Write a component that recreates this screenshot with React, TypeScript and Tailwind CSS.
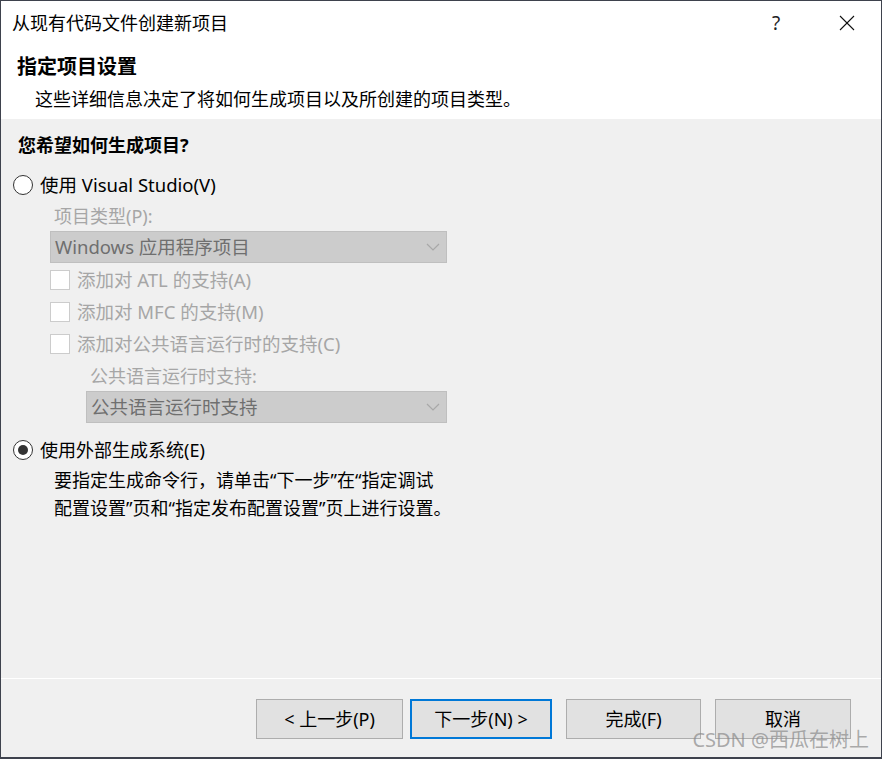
import React from "react";

const FONT = { fontFamily: '"Noto Sans", "Noto Sans CJK SC", sans-serif' };

function Chevron() {
  return (
    <svg width="14" height="8" viewBox="0 0 14 8" className="shrink-0">
      <polyline points="1,1 7,7 13,1" fill="none" stroke="#a8a8a8" strokeWidth="1.2" />
    </svg>
  );
}

function Dropdown({ text, width }: { text: string; width: string }) {
  return (
    <div className={`${width} h-[32px] bg-[#cccccc] border border-[#bfbfbf] flex items-center justify-between pl-[4px] pr-[6px]`}>
      <span className="text-[18.5px] leading-[30px] text-[#6f6f6f]">{text}</span>
      <Chevron />
    </div>
  );
}

function CheckRow({ label }: { label: string }) {
  return (
    <div className="h-[32px] flex items-center pl-[49px]">
      <div className="w-[20px] h-[20px] bg-white border border-[#cccccc]" />
      <span className="ml-[7px] text-[18.5px] leading-[26px] text-[#a6a6a6]">{label}</span>
    </div>
  );
}

function Radio({ checked }: { checked?: boolean }) {
  return (
    <div className="w-[20px] h-[20px] rounded-full bg-white border border-[#333333] flex items-center justify-center">
      {checked && <div className="w-[10px] h-[10px] rounded-full bg-[#333333]" />}
    </div>
  );
}

function Button({ label, width, focused }: { label: string; width: string; focused?: boolean }) {
  return (
    <div
      className={`${width} h-[40px] bg-[#e1e1e1] flex items-center justify-center text-[18px] text-black ${
        focused ? "border-2 border-[#0078d7]" : "border border-[#adadad]"
      }`}
    >
      {label}
    </div>
  );
}

export default function App() {
  return (
    <div
      style={FONT}
      className="relative w-[882px] h-[759px] flex flex-col border border-b-2 border-[#3e424d] bg-[#f0f0f0] overflow-hidden text-black"
    >
      {/* title bar + header */}
      <div className="bg-white">
        <div className="h-[43px] flex items-center pl-[11px]">
          <span className="text-[18px] leading-[26px] flex-1">从现有代码文件创建新项目</span>
          <span className="w-[20px] text-center text-[19px] leading-[26px] text-[#222] mr-[53px]">?</span>
          <svg width="16" height="16" viewBox="0 0 16 16" className="mr-[26px]">
            <line x1="1" y1="1" x2="15" y2="15" stroke="#111" strokeWidth="1.1" />
            <line x1="15" y1="1" x2="1" y2="15" stroke="#111" strokeWidth="1.1" />
          </svg>
        </div>
        <div className="pt-[9px] pb-[7px]">
          <div className="pl-[16px] text-[20px] leading-[28px] font-bold">指定项目设置</div>
          <div className="mt-[5px] pl-[34px] text-[18px] leading-[26px]">
            这些详细信息决定了将如何生成项目以及所创建的项目类型。
          </div>
        </div>
      </div>

      {/* body */}
      <div className="flex-1 flex flex-col pt-[13px]">
        <div className="pl-[17px] text-[18px] leading-[26px] font-bold">您希望如何生成项目?</div>

        <div className="mt-[13px] h-[28px] flex items-center pl-[12px]">
          <Radio />
          <span className="ml-[7px] text-[18.5px] leading-[26px]">使用 Visual Studio(V)</span>
        </div>

        <div className="mt-[4px] h-[26px] flex items-center pl-[53px] text-[18px] text-[#a6a6a6]">项目类型(P):</div>
        <div className="mt-[2px] pl-[49px]">
          <Dropdown text="Windows 应用程序项目" width="w-[397px]" />
        </div>

        <div className="mt-[1px]">
          <CheckRow label="添加对 ATL 的支持(A)" />
          <CheckRow label="添加对 MFC 的支持(M)" />
          <CheckRow label="添加对公共语言运行时的支持(C)" />
        </div>

        <div className="mt-[2px] h-[28px] flex items-center pl-[89px] text-[18px] text-[#a6a6a6]">公共语言运行时支持:</div>
        <div className="mt-[1px] pl-[85px]">
          <Dropdown text="公共语言运行时支持" width="w-[361px]" />
        </div>

        <div className="mt-[13px] h-[28px] flex items-center pl-[12px]">
          <Radio checked />
          <span className="ml-[7px] text-[18px] leading-[26px]">使用外部生成系统(E)</span>
        </div>
        <div className="mt-[2px] pl-[53px] text-[18px] leading-[28px]">
          <div>要指定生成命令行，请单击“下一步”在“指定调试</div>
          <div>配置设置”页和“指定发布配置设置”页上进行设置。</div>
        </div>
      </div>

      {/* separator */}
      <div className="h-px bg-white" />

      {/* footer */}
      <div className="h-[78px] pt-[20px] flex items-start pl-[255px]">
        <Button label="< 上一步(P)" width="w-[147px]" />
        <div className="ml-[7px]">
          <Button label="下一步(N) >" width="w-[142px]" focused />
        </div>
        <div className="ml-[14px]">
          <Button label="完成(F)" width="w-[135px]" />
        </div>
        <div className="ml-[14px]">
          <Button label="取消" width="w-[136px]" />
        </div>
      </div>

      {/* watermark */}
      <div className="absolute right-[12px] bottom-[4px] text-[20px] leading-[26px] text-[#8a8a8a]/70 pointer-events-none">
        CSDN @西瓜在树上
      </div>
    </div>
  );
}
